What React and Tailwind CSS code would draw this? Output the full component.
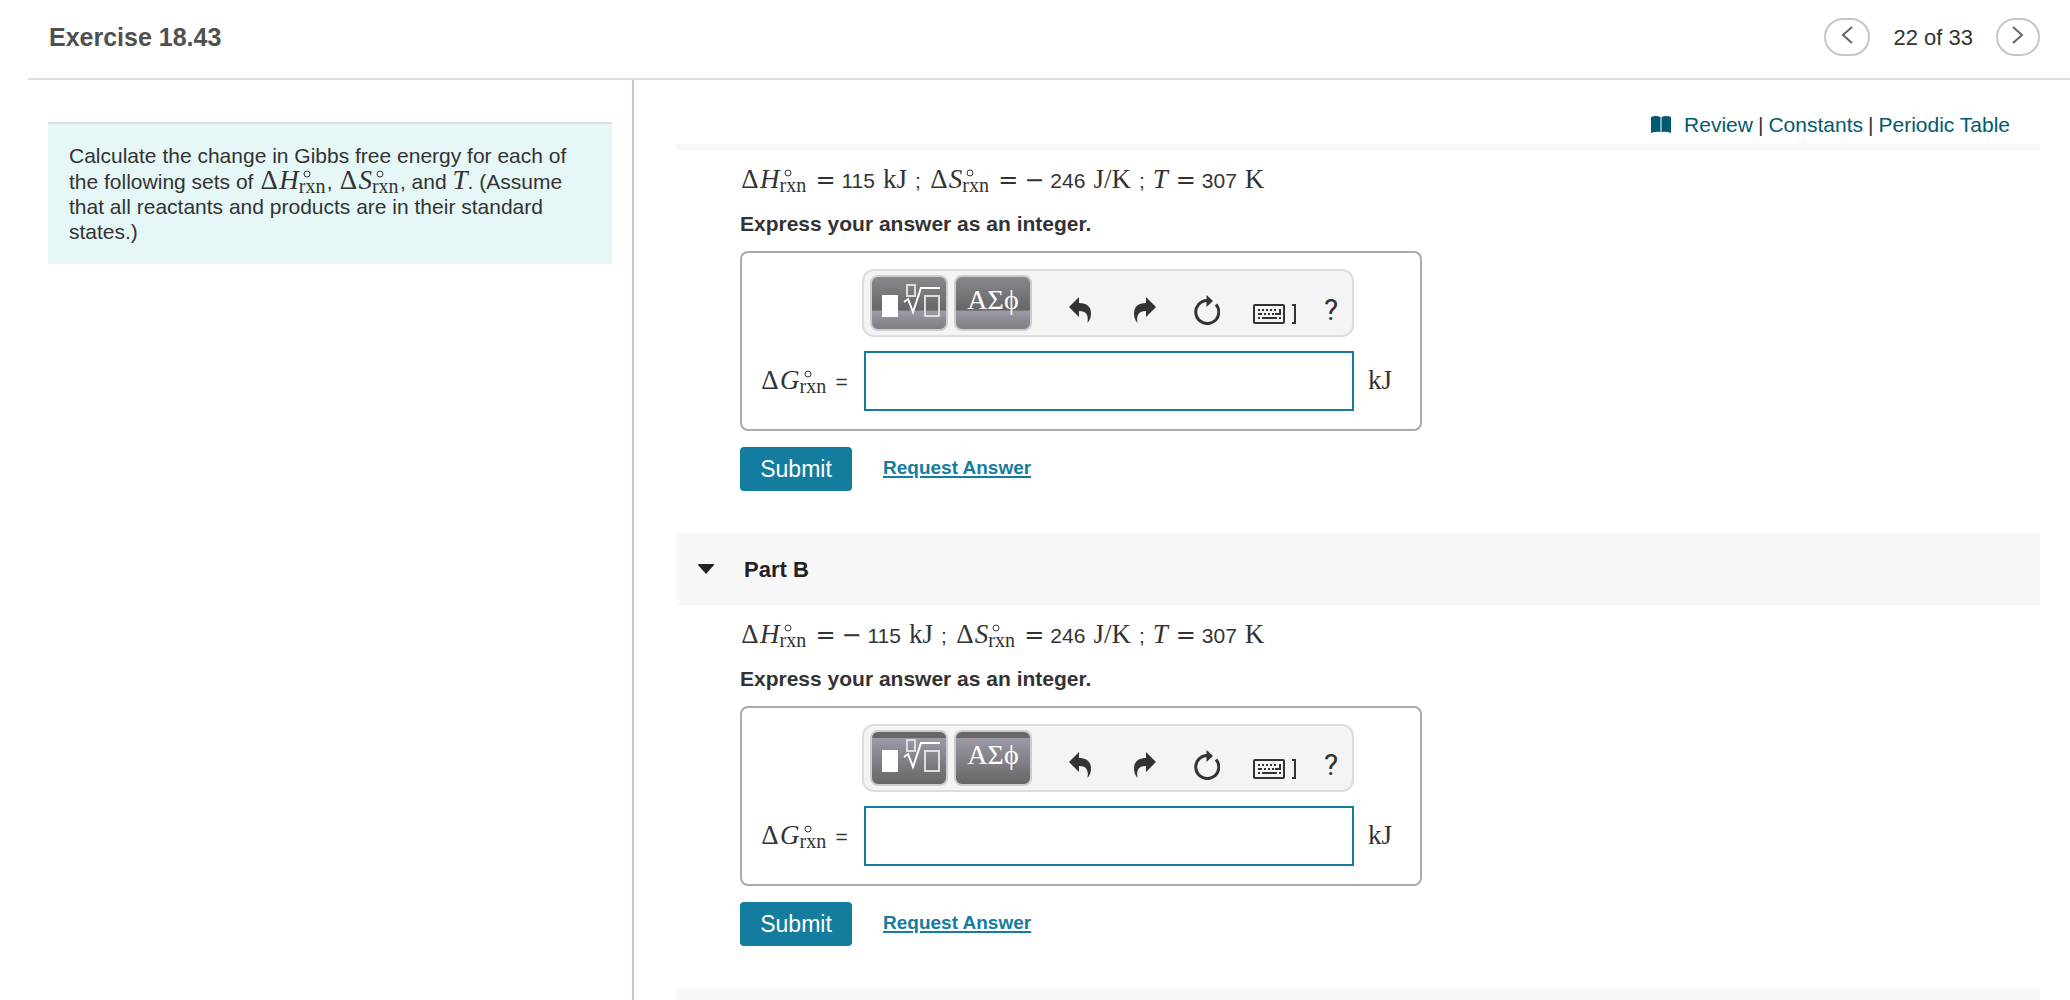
import React, { useState } from "react";

const Reaction = ({ letter }) => (
  <span className="inline-flex items-baseline font-['Liberation_Serif',serif] text-[27px] leading-6">
    <span className="w-5 text-center">Δ</span>
    <i>{letter}</i>
    <span className="relative top-1 w-7 text-[20px] leading-4">
      rxn
      <svg viewBox="0 0 8 8" className="absolute -top-2 left-1 h-2 w-2">
        <circle cx="4" cy="4" r="3" fill="none" stroke="currentColor" />
      </svg>
    </span>
  </span>
);

const Math = ({ children }) => (
  <span className="font-['Liberation_Serif',serif] text-[27px] leading-6">
    {children}
  </span>
);

const Op = ({ children }) => (
  <span className="w-[18px] text-center font-['DejaVu_Serif',serif] text-[24px] leading-6">
    {children}
  </span>
);

const UndoIcon = () => (
  <svg viewBox="0 0 22 26" className="h-[26px] w-[22px]" fill="currentColor">
    <path d="M0 10 10 0V6C18 6 22 10 22 16.500 22 20 21 23 18.500 26 19.500 19 18.500 14 10 14V20Z" />
  </svg>
);

const RedoIcon = () => (
  <svg viewBox="0 0 22 26" className="h-[26px] w-[22px]" fill="currentColor">
    <path d="M22 10 12 0V6C4 6 0 10 0 16.500 0 20 1 23 3.500 26 2.500 19 3.500 14 12 14V20Z" />
  </svg>
);

const ResetIcon = () => (
  <svg viewBox="0 0 26 30" className="h-[30px] w-[26px]" fill="none">
    <path
      d="M13.500 5.500A11.500 11.500 0 1 0 22 9.500"
      stroke="currentColor"
      strokeWidth="3"
    />
    <path d="M12.500 0 19 6 12.500 12Z" fill="currentColor" />
  </svg>
);

const KeyboardIcon = () => (
  <svg viewBox="0 0 43 20" className="h-5 w-[43px]" fill="none">
    <rect x="1" y="1" width="30" height="18" rx="1" stroke="currentColor" strokeWidth="2" />
    <path d="M5 6h2M9 6h2M13 6h2M17 6h2M21 6h2" stroke="currentColor" strokeWidth="2" />
    <path d="M5 10h4M11 10h2M15 10h2M19 10h2M22 10h6M27 5v6" stroke="currentColor" strokeWidth="2" />
    <path d="M5 14h2M9 14h15M26 14h2" stroke="currentColor" strokeWidth="2" />
    <path d="M39 1h3v18h-3" stroke="currentColor" strokeWidth="2" />
  </svg>
);

const TemplateIcon = () => (
  <svg viewBox="0 0 60 34" className="h-[34px] w-[60px]" fill="none" stroke="#fff">
    <rect x="0" y="11" width="16" height="22" fill="#fff" stroke="none" />
    <rect x="25" y="1" width="8" height="11" stroke="#ddd" strokeWidth="2" />
    <path d="M22 18l4-3 5 13 8-24h19" strokeWidth="2" />
    <rect x="43" y="12" width="14" height="20" stroke="#ddd" strokeWidth="2" />
  </svg>
);

const toolClass = {
  split:
    "bg-[linear-gradient(#88878c_0%,#666_64%,#9b9aa6_65%,#7f7e83_100%)]",
  capped:
    "bg-[linear-gradient(#666_0%,#666_11%,#9b9aa6_12%,#666_100%)]",
};

const AnswerBox = ({ id, tone }) => {
  const [answer, setAnswer] = useState("");
  const button =
    "flex h-14 w-[78px] items-center justify-center rounded-lg border-2 border-[#ccc] text-white " +
    toolClass[tone];

  return (
    <form onSubmit={(e) => e.preventDefault()}>
      <div className="mt-[15px] w-fit rounded-lg border-2 border-[#aaa] pt-4 pr-7 pb-[18px] pl-[18px]">
        <div className="ml-[102px] flex h-[68px] w-[492px] items-center rounded-xl border-2 border-[#ddd] bg-[#f4f4f4] pl-1.5 text-[#333]">
          <button type="button" aria-label="Templates" className={button + " pb-1 pl-1.5"}>
            <TemplateIcon />
          </button>
          <button
            type="button"
            aria-label="Symbols"
            className={button + " ml-1.5 pb-2 font-['Liberation_Serif',serif] text-[28px]"}
          >
            ΑΣϕ
          </button>
          <div className="flex flex-1 items-center pt-3.5">
            <button type="button" aria-label="Undo" className="ml-[37px]">
              <UndoIcon />
            </button>
            <button type="button" aria-label="Redo" className="ml-[43px]">
              <RedoIcon />
            </button>
            <button type="button" aria-label="Reset" className="ml-[38px]">
              <ResetIcon />
            </button>
            <button type="button" aria-label="Keyboard shortcuts" className="ml-[33px] pt-2">
              <KeyboardIcon />
            </button>
            <button type="button" className="ml-7 font-['Roboto',sans-serif] text-[30px] leading-8">
              ?
            </button>
          </div>
        </div>
        <div className="mt-3.5 flex items-center">
          <label htmlFor={id} className="flex w-[104px] items-baseline gap-2 text-[21px]">
            <Reaction letter="G" />
            <span>=</span>
          </label>
          <input
            id={id}
            type="text"
            value={answer}
            onChange={(e) => setAnswer(e.target.value)}
            className="h-[60px] w-[490px] border-2 border-[#147c9e] px-3 outline-none"
          />
          <span className="ml-3.5">
            <Math>kJ</Math>
          </span>
        </div>
      </div>
      <div className="mt-4 flex items-center gap-[31px]">
        <button
          type="submit"
          className="h-11 w-28 rounded-sm bg-[#147c9e] text-[23px] text-white"
        >
          Submit
        </button>
        <a
          href="#"
          className="mb-1 text-[19px] font-bold text-[#147c9e] underline decoration-2 underline-offset-2"
        >
          Request Answer
        </a>
      </div>
    </form>
  );
};

const App = () => {
  return (
    <div className="min-h-screen overflow-hidden bg-white font-['Liberation_Sans',Arial,sans-serif] text-[21px] leading-[25px] text-[#333]">
      <header className="ml-7 flex h-20 items-center justify-between border-b-2 border-[#ddd] pr-[30px] pb-1 pl-[21px]">
        <h1 className="text-[25px] font-bold text-[#505050]">Exercise 18.43</h1>
        <nav className="flex items-center gap-[23px] text-[22px]">
          <button
            aria-label="Previous"
            className="flex h-[38px] w-[46px] items-center justify-center rounded-full border-2 border-[#c6c6c6] pb-1 text-[#666]"
          >
            <svg viewBox="0 0 12 18" className="h-[18px] w-3" fill="none" stroke="currentColor" strokeWidth="2">
              <path d="M11 1 2 9l9 8" />
            </svg>
          </button>
          <span>22 of 33</span>
          <button
            aria-label="Next"
            className="flex h-[38px] w-11 items-center justify-center rounded-full border-2 border-[#c6c6c6] pb-1 text-[#666]"
          >
            <svg viewBox="0 0 12 18" className="h-[18px] w-3" fill="none" stroke="currentColor" strokeWidth="2">
              <path d="M1 1l9 8-9 8" />
            </svg>
          </button>
        </nav>
      </header>

      <div className="flex h-[calc(100vh-80px)]">
        <aside className="w-[634px] shrink-0 border-r-2 border-[#c0c6d4] pt-[42px] pr-5 pl-12">
          <p className="border-t-2 border-[#ddd] bg-[#e6f7f7] pt-[19px] pr-5 pb-5 pl-[21px]">
            Calculate the change in Gibbs free energy for each of the following
            sets of <Reaction letter="H" />, <Reaction letter="S" />, and{" "}
            <i><Math>T</Math></i>. (Assume that all reactants and products are in
            their standard states.)
          </p>
        </aside>

        <main className="min-w-0 flex-1 overflow-hidden pr-[30px] pl-[42px]">
          <div className="flex h-16 items-center justify-end gap-[5px] pt-6 pr-[30px] text-[#005a70]">
            <svg viewBox="0 0 20 17" className="mr-2 h-[17px] w-5">
              <path d="M0 1Q5-1 9.500 1V16Q5 15 0 17ZM10.500 1Q15-1 20 1V17Q15 15 10.500 16Z" fill="currentColor" />
            </svg>
            <a href="#">Review</a>
            <span className="text-[#333]">|</span>
            <a href="#">Constants</a>
            <span className="text-[#333]">|</span>
            <a href="#">Periodic Table</a>
          </div>

          <section className="border-t-[6px] border-[#f8f8f8] pl-16">
            <div className="mt-[17px] flex h-8 items-baseline gap-2">
              <Reaction letter="H" />
              <Op>=</Op>
              <span>115</span>
              <Math>kJ</Math>
              <span>;</span>
              <Reaction letter="S" />
              <Op>=</Op>
              <Op>−</Op>
              <span>246</span>
              <Math>J/K</Math>
              <span>;</span>
              <Math><i>T</i></Math>
              <Op>=</Op>
              <span>307</span>
              <Math>K</Math>
            </div>
            <p className="mt-3 font-bold">Express your answer as an integer.</p>
            <AnswerBox id="answer-a" tone="split" />
          </section>

          <button className="mt-[42px] flex h-[72px] w-full items-center bg-[#f8f8f8] pl-[22px] text-[22px] font-bold text-[#222]">
            <svg viewBox="0 0 16 10" className="mr-[30px] h-2.5 w-4">
              <path d="M0 1Q0 0 1 0H15Q16 0 16 1L8 10Z" fill="currentColor" />
            </svg>
            Part B
          </button>

          <section className="pl-16">
            <div className="mt-[17px] flex h-8 items-baseline gap-2">
              <Reaction letter="H" />
              <Op>=</Op>
              <Op>−</Op>
              <span>115</span>
              <Math>kJ</Math>
              <span>;</span>
              <Reaction letter="S" />
              <Op>=</Op>
              <span>246</span>
              <Math>J/K</Math>
              <span>;</span>
              <Math><i>T</i></Math>
              <Op>=</Op>
              <span>307</span>
              <Math>K</Math>
            </div>
            <p className="mt-3 font-bold">Express your answer as an integer.</p>
            <AnswerBox id="answer-b" tone="capped" />
          </section>

          <div className="mt-[42px] h-[72px] bg-[#f8f8f8]" />
        </main>
      </div>
    </div>
  );
};

export default App;
